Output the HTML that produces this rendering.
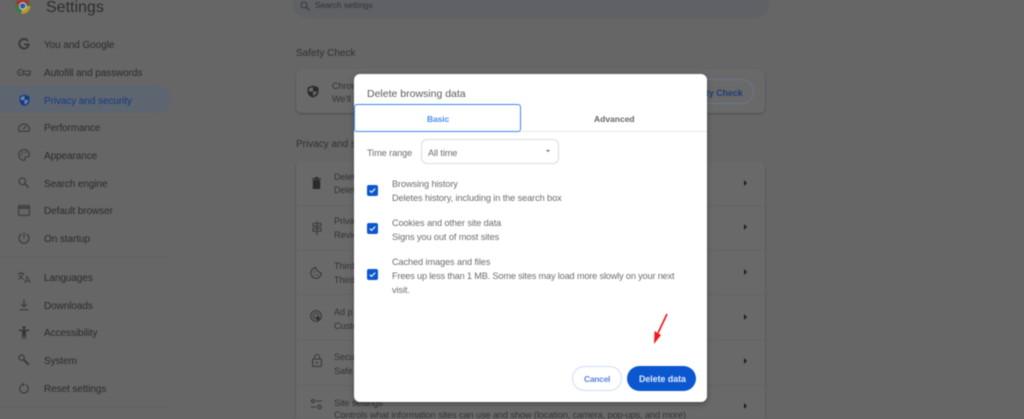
<!DOCTYPE html>
<html><head><meta charset="utf-8"><style>
html,body{margin:0;padding:0}
body{width:1024px;height:419px;overflow:hidden;background:#666;position:relative;font-family:"Liberation Sans",sans-serif}
#w{position:absolute;left:0;top:0;width:1024px;height:419px;filter:blur(.45px);overflow:hidden}
.t{position:absolute;white-space:nowrap;font-size:9.2px;letter-spacing:-.1px;line-height:14px;color:#333}
.n{left:44px;font-size:10px;letter-spacing:-.08px;color:#2b2b2b}
.c{position:absolute;left:296px;width:469px;background:#696969;border-radius:6px;box-shadow:0 1px 2px rgba(0,0,0,.25)}
.l{position:absolute;left:296px;width:469px;height:1px;background:#626262}
svg{position:absolute;overflow:visible}
.i{fill:none;stroke:#3a3a3a;stroke-width:1.100}
.d{color:#6c6c6c}
.cb{position:absolute;left:367px;width:11px;height:11px;background:#0b57d0;border-radius:2px}
.cb svg{left:0;top:0}
.ar{position:absolute;left:744px;width:0;height:0;border-left:3.500px solid #1d1d1d;border-top:3px solid transparent;border-bottom:3px solid transparent}
</style></head><body><div id="w">

<svg style="left:15px;top:-2px" width="16" height="16" viewBox="0 0 16 16">
<circle cx="7.700" cy="8" r="7.700" fill="#3a7a44"/>
<path d="M7.700 8L15.400 8A7.700 7.700 0 0 1 7.700 15.700Z" fill="#b89a2e"/>
<path d="M7.700 8L11.500 9.500 7.700 15.700 6 15.500Z" fill="#b89a2e"/>
<path d="M1 4.200A7.700 7.700 0 0 1 15 5.500H7.700L4 10Z" fill="#a2362c"/>
<circle cx="7.700" cy="8" r="3.700" fill="#dcdcdc"/><circle cx="7.700" cy="8" r="2.800" fill="#2a5bab"/>
</svg>
<div class="t" style="left:46px;top:-2px;font-size:16px;letter-spacing:0;line-height:20px;color:#2d2d2d">Settings</div>

<div style="position:absolute;left:293px;top:-20px;width:476px;height:38px;background:#5f6166;border-radius:14px"></div>
<svg style="left:300px;top:1px" width="10" height="10" viewBox="0 0 10 10"><circle cx="4" cy="4" r="3" class="i"/><path d="M6.200 6.200L9.500 9.500" class="i"/></svg>
<div class="t" style="left:315px;top:-2px;font-size:8.400px;letter-spacing:0;color:#333">Search settings</div>

<div style="position:absolute;left:0;top:86px;width:171px;height:27px;background:#5d6571;border-radius:0 14px 14px 0"></div>

<svg style="left:18px;top:38px" width="12" height="12" viewBox="0 0 12 12"><path d="M10 3A4.800 4.800 0 1 0 10.800 6.500H6.200" fill="none" stroke="#383838" stroke-width="1.800"/></svg>
<div class="t n" style="top:39px">You and Google</div>
<svg style="left:17px;top:68px" width="14" height="9" viewBox="0 0 14 9"><circle cx="3.600" cy="4.500" r="3" class="i"/><circle cx="3.600" cy="4.500" r=".8" fill="#3a3a3a"/><path d="M6.600 3h6.600v3H12v1.500H9.500V6H6.600" class="i"/></svg>
<div class="t n" style="top:67px">Autofill and passwords</div>
<svg style="left:19px;top:94px" width="11" height="12" viewBox="0 0 11 12"><path d="M5.500 .5L10.500 2.400V6c0 3-2 5-5 6-3-1-5-3-5-6V2.400Z" fill="#143d87"/><path d="M5.500 1.800V6H1.800V3.200ZM5.500 6h3.700C9 8 7.500 9.800 5.500 10.600Z" fill="#76859c"/></svg>
<div class="t n" style="top:94.500px;color:#173a7c">Privacy and security</div>
<svg style="left:18px;top:122px" width="12" height="10" viewBox="0 0 12 10"><path d="M1 9.200A5 5 0 0 1 6 2.200a5 5 0 0 1 5 7Z" class="i"/><path d="M5.200 7L8 4.200" class="i"/></svg>
<div class="t n" style="top:122px">Performance</div>
<svg style="left:18px;top:149px" width="12" height="12" viewBox="0 0 12 12"><path d="M6 .7A5.300 5.300 0 1 0 6 11.300c1.200 0 1.200-1 .8-1.600-.5-.8 0-1.700 1-1.700h1.500c1.200 0 2-.8 2-2.200C11.300 3 9 .7 6 .7Z" class="i"/><circle cx="3.400" cy="6" r=".8" fill="#3a3a3a"/><circle cx="4.600" cy="3.500" r=".8" fill="#3a3a3a"/><circle cx="7.400" cy="3.500" r=".8" fill="#3a3a3a"/></svg>
<div class="t n" style="top:150px">Appearance</div>
<svg style="left:18px;top:177px" width="11" height="11" viewBox="0 0 11 11"><circle cx="4.300" cy="4.300" r="3.300" class="i"/><path d="M6.800 6.800L10.500 10.500" class="i" style="stroke-width:1.400"/></svg>
<div class="t n" style="top:178px">Search engine</div>
<svg style="left:18px;top:205px" width="12" height="11" viewBox="0 0 12 11"><rect x=".6" y=".6" width="10.800" height="9.800" rx="1" class="i"/><path d="M.6 2.800h10.800" stroke="#3a3a3a" stroke-width="1.800"/></svg>
<div class="t n" style="top:205px">Default browser</div>
<svg style="left:18px;top:232px" width="12" height="12" viewBox="0 0 12 12"><path d="M6 .5V6" class="i"/><path d="M3.300 2A5 5 0 1 0 8.700 2" class="i"/></svg>
<div class="t n" style="top:233px">On startup</div>

<div style="position:absolute;left:0;top:257px;width:172px;height:1px;background:#626262"></div>

<svg style="left:17px;top:271px" width="14" height="12" viewBox="0 0 14 12"><path d="M.5 2.500h7M4 .5v2M6.200 2.500C5.500 5 3 7.500 1 8.500M2 4c1 2 3 3.500 4.500 4.200" class="i" style="stroke-width:.9"/><path d="M7.500 12L10.300 5.500 13.200 12M8.500 10h3.700" class="i" style="stroke-width:.9"/></svg>
<div class="t n" style="top:272px">Languages</div>
<svg style="left:19px;top:299px" width="10" height="12" viewBox="0 0 10 12"><path d="M5 .5V7.500M2 4.800L5 7.800 8 4.800M.5 10.800h9" class="i"/></svg>
<div class="t n" style="top:300px">Downloads</div>
<svg style="left:18px;top:326px" width="12" height="13" viewBox="0 0 12 13"><circle cx="6" cy="1.700" r="1.400" fill="#333"/><path d="M.8 3.800h10.400v1.300H7.800V13H6.600V9.500H5.400V13H4.200V5.100H.8Z" fill="#333"/></svg>
<div class="t n" style="top:327px">Accessibility</div>
<svg style="left:18px;top:354px" width="12" height="12" viewBox="0 0 12 12"><circle cx="3.600" cy="3.600" r="2.700" class="i"/><path d="M5.500 5.500L10.800 10.800" stroke="#3a3a3a" stroke-width="2"/></svg>
<div class="t n" style="top:355px">System</div>
<svg style="left:19px;top:382px" width="10" height="12" viewBox="0 0 10 12"><path d="M3 2.800A4.300 4.300 0 1 0 7 2.800" class="i"/><path d="M3.500 .5L6 2.500 3.500 4.500Z" fill="#3a3a3a"/></svg>
<div class="t n" style="top:383px">Reset settings</div>
<div style="position:absolute;left:0;top:407px;width:172px;height:1px;background:#626262"></div>

<div class="t" style="left:296px;top:46.500px;font-size:10px;letter-spacing:0;color:#303030">Safety Check</div>
<div class="c" style="top:69px;height:44px"></div>
<svg style="left:307px;top:85px" width="12" height="13" viewBox="0 0 12 13"><path d="M6 .5L11.500 2.500V6.500c0 3-2.300 5-5.500 6-3.200-1-5.500-3-5.500-6V2.500Z" fill="#2a2a2a"/><path d="M6 2V6.500H2V3.500ZM6 6.500h4C9.700 8.500 8 10 6 11Z" fill="#696969"/></svg>
<div class="t" style="left:332px;top:79px">Chrome</div>
<div class="t" style="left:332px;top:92px">We'll</div>
<div style="position:absolute;left:690px;top:79px;width:64px;height:25px;border:1px solid #6a7790;border-radius:13px;box-sizing:border-box"></div>
<div class="t" style="left:706px;top:85.500px;font-size:8.800px;letter-spacing:0;font-weight:bold;color:#1c3d78">ty Check</div>

<div class="t" style="left:296px;top:138px;font-size:10px;letter-spacing:0;color:#303030">Privacy and security</div>
<div class="c" style="top:161px;height:270px"></div>
<div class="l" style="top:205px"></div><div class="l" style="top:250px"></div><div class="l" style="top:294px"></div><div class="l" style="top:340px"></div><div class="l" style="top:385px"></div>

<svg style="left:312px;top:177px" width="9" height="12" viewBox="0 0 9 12"><path d="M0 1.200h9v1H0ZM3 0h3v1.200H3ZM.8 2.800h7.400V12H.8Z" fill="#2a2a2a"/></svg>
<svg style="left:312px;top:221px" width="10" height="14" viewBox="0 0 10 14"><path d="M5 0v14" class="i"/><rect x="1" y="2.500" width="8" height="2.800" fill="none" stroke="#3a3a3a"/><rect x="1" y="7.500" width="8" height="2.800" fill="none" stroke="#3a3a3a"/></svg>
<svg style="left:310px;top:267px" width="12" height="12" viewBox="0 0 12 12"><path d="M6 .7A5.300 5.300 0 1 0 11.300 6 2.500 2.500 0 0 1 8.500 4 2.500 2.500 0 0 1 6 .7Z" class="i"/><circle cx="4" cy="5" r=".8" fill="#3a3a3a"/><circle cx="7" cy="7.800" r=".8" fill="#3a3a3a"/><circle cx="3.800" cy="8.300" r=".6" fill="#3a3a3a"/></svg>
<svg style="left:310px;top:310px" width="12" height="13" viewBox="0 0 12 13"><circle cx="6" cy="6" r="5.300" class="i"/><circle cx="6" cy="6" r="2.800" class="i"/><path d="M5.500 5.500L11 8.500 8.800 9.300 8 11.800Z" fill="#2a2a2a"/></svg>
<svg style="left:312px;top:354px" width="10" height="13" viewBox="0 0 10 13"><rect x=".6" y="5" width="8.800" height="7.400" rx="1" class="i"/><path d="M2.500 5V3a2.500 2.500 0 0 1 5 0v2" class="i"/><circle cx="5" cy="8.700" r="1" fill="#3a3a3a"/></svg>
<svg style="left:311px;top:399px" width="11" height="12" viewBox="0 0 11 12"><circle cx="2" cy="2" r="1.500" class="i"/><path d="M5 2h6M0 8h5" class="i"/><circle cx="8.500" cy="8" r="1.700" class="i"/></svg>

<div class="t" style="left:334px;top:170px">Delete</div>
<div class="t" style="left:334px;top:183px">Delete</div>
<div class="t" style="left:334px;top:214px">Privacy</div>
<div class="t" style="left:334px;top:228px">Review</div>
<div class="t" style="left:334px;top:259px">Third</div>
<div class="t" style="left:334px;top:273px">Third</div>
<div class="t" style="left:334px;top:305px">Ad p</div>
<div class="t" style="left:334px;top:319px">Custo</div>
<div class="t" style="left:334px;top:350px">Secu</div>
<div class="t" style="left:334px;top:364px">Safe</div>
<div class="t" style="left:334px;top:396px">Site settings</div>
<div class="t" style="left:334px;top:408px">Controls what information sites can use and show (location, camera, pop-ups, and more)</div>

<div class="ar" style="top:180px"></div><div class="ar" style="top:224px"></div><div class="ar" style="top:269px"></div><div class="ar" style="top:314px"></div><div class="ar" style="top:358px"></div><div class="ar" style="top:403px"></div>

<div style="position:absolute;left:354px;top:74px;width:353px;height:328px;background:#fff;border-radius:6px;box-shadow:0 2px 6px rgba(0,0,0,.3)"></div>
<div class="t" style="left:367px;top:87px;font-size:10.500px;letter-spacing:0;color:#5a5a5a">Delete browsing data</div>
<div style="position:absolute;left:354px;top:131px;width:353px;height:1px;background:#e8e8e8"></div>
<div style="position:absolute;left:354px;top:104px;width:167px;height:28px;box-sizing:border-box;border:1.500px solid #3d86ec;border-radius:3px;background:#fff"></div>
<div class="t" style="left:427px;top:112px;font-size:8.500px;letter-spacing:-.1px;font-weight:bold;color:#4d8ff0">Basic</div>
<div class="t" style="left:594px;top:112px;font-size:8.500px;letter-spacing:0;font-weight:bold;color:#666">Advanced</div>

<div class="t d" style="left:367px;top:146px">Time range</div>
<div style="position:absolute;left:421px;top:139px;width:138px;height:25px;box-sizing:border-box;border:1px solid #dcdcdc;border-radius:6px"></div>
<div class="t d" style="left:428px;top:146px">All time</div>
<div style="position:absolute;left:546px;top:150px;width:0;height:0;border-top:2.500px solid #666;border-left:2.500px solid transparent;border-right:2.500px solid transparent"></div>

<div class="cb" style="top:185px"><svg width="11" height="11" viewBox="0 0 11 11"><path d="M2.800 5.700L4.600 7.400 8.200 3.600" fill="none" stroke="#fff" stroke-width="1.100"/></svg></div>
<div class="t d" style="left:392px;top:177px">Browsing history</div>
<div class="t d" style="left:392px;top:191px">Deletes history, including in the search box</div>
<div class="cb" style="top:223px"><svg width="11" height="11" viewBox="0 0 11 11"><path d="M2.800 5.700L4.600 7.400 8.200 3.600" fill="none" stroke="#fff" stroke-width="1.100"/></svg></div>
<div class="t d" style="left:392px;top:216px">Cookies and other site data</div>
<div class="t d" style="left:392px;top:230px">Signs you out of most sites</div>
<div class="cb" style="top:269px"><svg width="11" height="11" viewBox="0 0 11 11"><path d="M2.800 5.700L4.600 7.400 8.200 3.600" fill="none" stroke="#fff" stroke-width="1.100"/></svg></div>
<div class="t d" style="left:392px;top:254.500px">Cached images and files</div>
<div class="t d" style="left:392px;top:268.500px;letter-spacing:-.17px">Frees up less than 1 MB. Some sites may load more slowly on your next</div>
<div class="t d" style="left:392px;top:282.500px">visit.</div>

<svg style="left:650px;top:312px" width="20" height="34" viewBox="0 0 20 34"><path d="M17 2L8 21" stroke="#f01c1c" stroke-width="1.700" fill="none"/><path d="M4 32L4.500 19 11 23Z" fill="#f01c1c"/></svg>

<div style="position:absolute;left:572px;top:366px;width:50px;height:25px;box-sizing:border-box;border:1px solid #cfdcf5;border-radius:13px;background:#fff"></div>
<div class="t" style="left:584px;top:372px;font-size:8.500px;letter-spacing:-.3px;font-weight:bold;color:#5b86d8">Cancel</div>
<div style="position:absolute;left:627px;top:366px;width:69px;height:25px;border-radius:13px;background:#0b57d0"></div>
<div class="t" style="left:639px;top:372px;font-size:8.800px;letter-spacing:0;font-weight:bold;color:#e4ecfa">Delete data</div>

</div></body></html>
